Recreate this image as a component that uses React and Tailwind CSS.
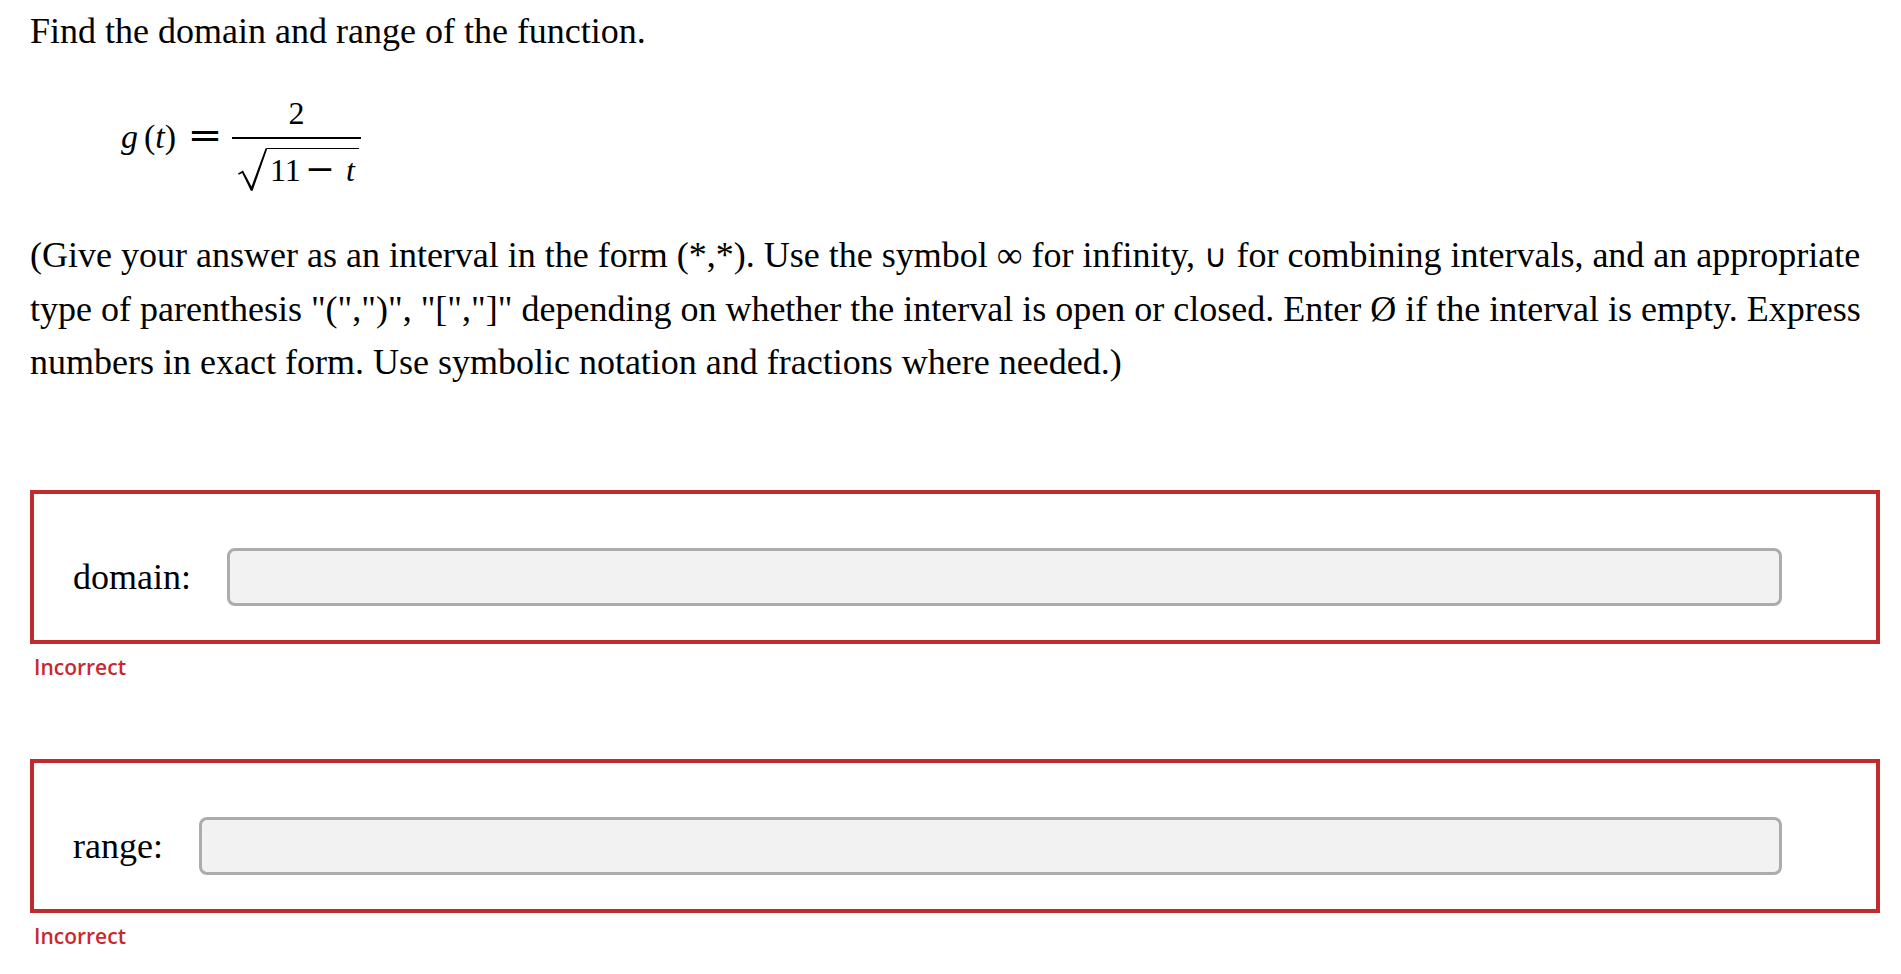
import React from "react";

function Radical() {
  return (
    <svg width="30" height="43" viewBox="0 0 30 43" className="block shrink-0">
      <path d="M1 25.5 L6 22.5 L14.5 38.5 L28.6 0.2 L30 0.2 L30 1.6 L15.6 42.8 L13.8 42.8 L5.2 25 L1.8 26.8 Z" fill="#000" />
    </svg>
  );
}

function AnswerBox({ label }) {
  return (
    <div>
      <div className="flex items-center border-4 border-[#c02b2e] pl-[39px] pr-[94px] pt-[54px] pb-[34px]">
        <label className="text-[36px] leading-[40px] text-black shrink-0">{label}</label>
        <div className="ml-[36px] flex-1 h-[58px] rounded-[8px] border-[3px] border-[#acacac] bg-[#f2f2f2]" />
      </div>
      <div className="mt-[8px] pl-[4px] font-['Open_Sans',sans-serif] font-semibold text-[21px] leading-[31px] text-[#c8282f]">
        Incorrect
      </div>
    </div>
  );
}

export default function App() {
  return (
    <div className="min-h-screen bg-white font-['Liberation_Serif','Times_New_Roman',serif] text-black pl-[30px] pr-[21px] pt-[4px]">
      <p className="text-[36px] leading-[54px]">Find the domain and range of the function.</p>

      <div className="mt-[35px] ml-[91px] flex items-start text-[34px]">
        <div className="mt-[22px] flex items-baseline leading-[40px]">
          <span className="italic">g</span>
          <span className="ml-[6px]">(</span>
          <span className="italic">t</span>
          <span>)</span>
          <span className="ml-[13px] mr-[11px] inline-block scale-x-110 font-['DejaVu_Serif',serif] text-[38px] leading-[40px]">=</span>
        </div>
        <div className="flex flex-col items-center text-[32px]">
          <div className="h-[40px] leading-[40px] mb-[4px]">2</div>
          <div className="h-[2px] w-full bg-black" />
          <div className="mt-[9px] flex items-start pl-[5px] pr-[2px]">
            <Radical />
            <div className="border-t-[1.5px] border-black leading-[40px] pl-[3px] pr-[4px] flex items-baseline">
              <span>11</span>
              <span className="ml-[4px] font-['DejaVu_Serif',serif] text-[36px]">−</span>
              <span className="ml-[11px] italic">t</span>
            </div>
          </div>
        </div>
      </div>

      <p className="mt-[38px] text-[36px] leading-[53px]">
        (Give your answer as an interval in the form (*,*). Use the symbol ∞ for infinity,{" "}
        <span className="font-['DejaVu_Sans',sans-serif] text-[32px]">∪</span> for combining intervals, and an
        appropriate type of parenthesis "(",")", "[","]" depending on whether the interval is open or closed. Enter Ø
        if the interval is empty. Express numbers in exact form. Use symbolic notation and fractions where needed.)
      </p>

      <div className="mt-[101px]">
        <AnswerBox label="domain:" />
      </div>
      <div className="mt-[76px]">
        <AnswerBox label="range:" />
      </div>
    </div>
  );
}
